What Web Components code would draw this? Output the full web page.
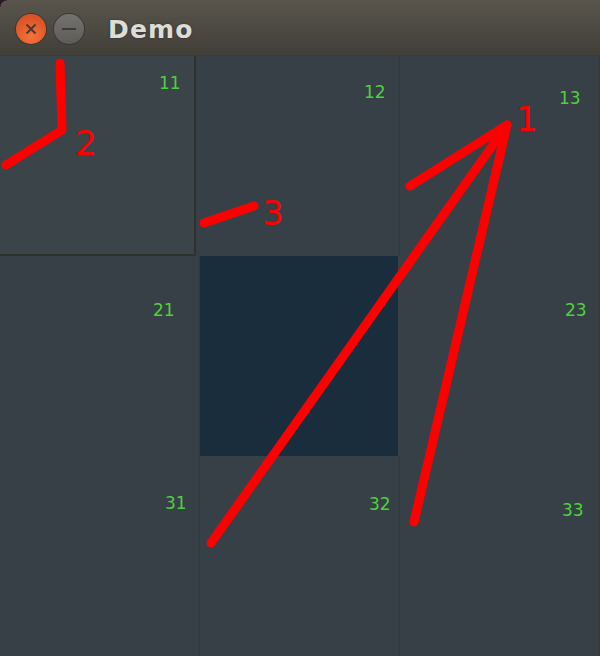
<!DOCTYPE html>
<html><head><meta charset="utf-8"><style>
html,body{margin:0;padding:0;width:600px;height:656px;overflow:hidden;background:#374046}
</style></head><body>
<demo-window>
<demo-cell active style="--x:159px;--y:17px">11</demo-cell>
<demo-cell style="--x:164px;--y:26px">12</demo-cell>
<demo-cell style="--x:159px;--y:32px">13</demo-cell>
<demo-cell style="--x:153px;--y:44px">21</demo-cell>
<demo-cell dark></demo-cell>
<demo-cell style="--x:165px;--y:44px">23</demo-cell>
<demo-cell style="--x:165px;--y:37px">31</demo-cell>
<demo-cell style="--x:169px;--y:38px">32</demo-cell>
<demo-cell style="--x:162px;--y:44px">33</demo-cell>
</demo-window>
<script>
customElements.define('demo-window',class extends HTMLElement{constructor(){super();this.attachShadow({mode:'open'}).innerHTML=`<style>
:host{display:flex;flex-direction:column;width:600px;height:656px;position:relative;font-family:"DejaVu Sans",sans-serif}
header{flex:none;display:flex;align-items:center;gap:8px;padding:2px 0 0 16px;box-sizing:border-box;border-bottom:1px solid #3d3a36;background:linear-gradient(#5a564e,#55524a 8px,#423f39);position:relative;height:56px}
.corner{position:absolute;left:0;top:0;width:7px;height:7px;background:radial-gradient(circle at 100% 100%,transparent 6px,#2c1a2a 7px)}
.btn{width:30px;height:30px;border-radius:50%;box-shadow:0 0 0 1px #3a3833;display:flex;align-items:center;justify-content:center}
.close{background:radial-gradient(circle at 50% 75%,#f4733c,#dd5426 70%,#c9502a)}
.min{background:linear-gradient(#73726e,#5d5c58)}
.title{font-size:25px;font-weight:bold;color:#dedcd6;margin:2px 0 0 16px;letter-spacing:1.2px;text-shadow:0 0 2px #2c2a26}
main{flex:1;display:grid;grid-template-columns:repeat(3,200px);grid-template-rows:repeat(3,200px);overflow:hidden}
svg{position:absolute;left:0;top:0;pointer-events:none}
.n{position:absolute;font-size:34px;color:#f00;line-height:40px}
</style>
<header><div class="corner"></div><div class="btn close"><svg style="position:static" width="12" height="12" viewBox="0 0 12 12"><path d="M1.500 1.500l9 9M10.500 1.500l-9 9" stroke="#4a3a30" stroke-width="2"/></svg></div><div class="btn min"><svg style="position:static" width="14" height="4" viewBox="0 0 14 4"><path d="M0 2h14" stroke="#3c3b38" stroke-width="2"/></svg></div><div class="title">Demo</div></header>
<main><slot></slot></main>
<svg width="600" height="656" fill="none" stroke="#f00" stroke-width="9" stroke-linecap="round" stroke-linejoin="round">
<path d="M60 63L62 130L6 165"/><path d="M204 223L254 206"/><path d="M410 186L507 125L414 522"/><path d="M507 125L211 543"/>
</svg>
<span class="n" style="left:516px;top:99px">1</span><span class="n" style="left:75px;top:123px">2</span><span class="n" style="left:262px;top:193px">3</span>`}});
customElements.define('demo-cell',class extends HTMLElement{constructor(){super();this.attachShadow({mode:'open'}).innerHTML=`<style>
:host{display:block;position:relative;box-sizing:border-box;color:#4fd03f;font-size:17px;border-right:2px solid #353c41}
:host([active]){border-right:2px solid #2f312f;border-bottom:2px solid #2f312f;background:#3a4449;width:196px;height:200px}
:host([dark]){background:#192d3c;width:198px;border:0}
span{position:absolute;left:var(--x);top:var(--y);line-height:20px}
</style><span><slot></slot></span>`}});
</script>
</body></html>
